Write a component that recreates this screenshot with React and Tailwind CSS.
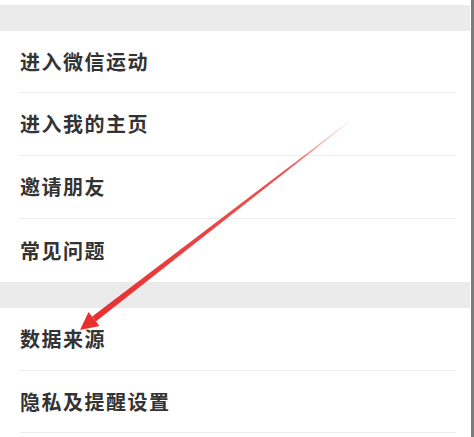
import React from "react";

const font = { fontFamily: '"Noto Sans CJK SC", "Noto Sans", sans-serif' };

function Row({ label, h = "h-[63px]", divider = true }) {
  return (
    <div className={`${h} flex flex-col bg-white`}>
      <div className="flex-1 flex items-center pl-[20px]">
        <span className="text-[20px] font-bold tracking-[1.5px] text-[#333333] leading-none" style={font}>
          {label}
        </span>
      </div>
      {divider ? <div className="ml-[20px] mr-[16px] h-px bg-[#ececec]" /> : null}
    </div>
  );
}

export default function App() {
  return (
    <div className="relative w-[474px] h-[437px] bg-white overflow-hidden flex">
      <div className="w-[471px] flex flex-col">
        <div className="h-[5px] bg-white" />
        <div className="h-[26px] bg-[#ebebeb] mr-[1px]" />
        <Row label="进入微信运动" h="h-[62px]" />
        <Row label="进入我的主页" />
        <Row label="邀请朋友" />
        <Row label="常见问题" divider={false} />
        <div className="h-[26px] bg-[#ebebeb] mr-[1px]" />
        <Row label="数据来源" />
        <Row label="隐私及提醒设置" h="h-[62px]" />
        <div className="flex-1 bg-white" />
      </div>
      <div className="w-[3px] bg-[#7b7b7b]" />
      <svg className="absolute inset-0 pointer-events-none" width="474" height="437" viewBox="0 0 474 437">
        <defs>
          <linearGradient id="g" x1="350" y1="121" x2="94" y2="319" gradientUnits="userSpaceOnUse">
            <stop offset="0" stopColor="#ef3b3b" stopOpacity="0.1" />
            <stop offset="0.25" stopColor="#ea3436" stopOpacity="0.85" />
            <stop offset="1" stopColor="#e8302f" stopOpacity="1" />
          </linearGradient>
        </defs>
        <polygon points="350.2,121.3 349.8,120.7 92.2,316.6 95.8,321.4" fill="url(#g)" />
        <polygon points="80,330 88.5,312 99.5,326" fill="#e8302f" />
      </svg>
    </div>
  );
}
